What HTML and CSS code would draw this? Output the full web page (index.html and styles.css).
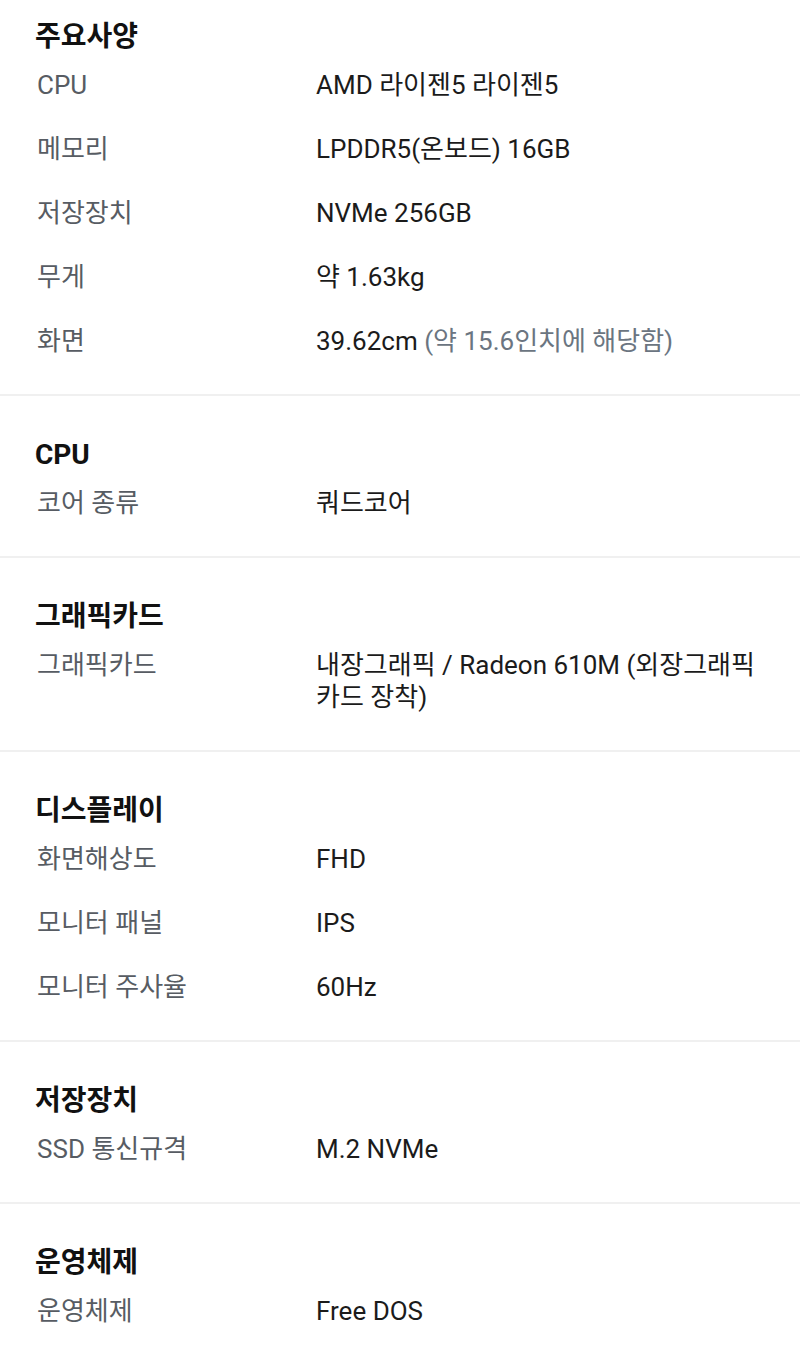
FILE: index.html
```html
<!DOCTYPE html>
<html lang="ko">
<head>
    <meta charset="UTF-8">
    <meta name="viewport" content="width=device-width, initial-scale=1.0">
    <title>상세 사양</title>
    <link rel="stylesheet" href="styles.css">
</head>
<body>
    <div class="spec-list">
        <section class="spec-section first">
            <h2>주요사양</h2>
            <div class="spec-row"><span class="label">CPU</span><span class="value">AMD 라이젠5 라이젠5</span></div>
            <div class="spec-row"><span class="label">메모리</span><span class="value">LPDDR5(온보드) 16GB</span></div>
            <div class="spec-row"><span class="label">저장장치</span><span class="value">NVMe 256GB</span></div>
            <div class="spec-row"><span class="label">무게</span><span class="value">약 1.63kg</span></div>
            <div class="spec-row"><span class="label">화면</span><span class="value">39.62cm <span class="note">(약 15.6인치에 해당함)</span></span></div>
        </section>

        <section class="spec-section">
            <h2>CPU</h2>
            <div class="spec-row"><span class="label">코어 종류</span><span class="value">쿼드코어</span></div>
        </section>

        <section class="spec-section">
            <h2>그래픽카드</h2>
            <div class="spec-row"><span class="label">그래픽카드</span><span class="value">내장그래픽 / Radeon 610M (외장그래픽 카드 장착)</span></div>
        </section>

        <section class="spec-section">
            <h2>디스플레이</h2>
            <div class="spec-row"><span class="label">화면해상도</span><span class="value">FHD</span></div>
            <div class="spec-row"><span class="label">모니터 패널</span><span class="value">IPS</span></div>
            <div class="spec-row"><span class="label">모니터 주사율</span><span class="value">60Hz</span></div>
        </section>

        <section class="spec-section">
            <h2>저장장치</h2>
            <div class="spec-row"><span class="label">SSD 통신규격</span><span class="value">M.2 NVMe</span></div>
        </section>

        <section class="spec-section last">
            <h2>운영체제</h2>
            <div class="spec-row"><span class="label">운영체제</span><span class="value">Free DOS</span></div>
        </section>
    </div>
</body>
</html>
```

FILE: styles.css
```css
body {
    margin: 0;
    background: #fff;
    font-family: Roboto, "Noto Sans CJK KR", sans-serif;
    color: #1b1b1b;
}
.spec-list {
    width: 100%;
}
.spec-section {
    padding: 43px 35px 21px 35px;
    border-bottom: 2px solid #f0f0f0;
}
.spec-section.first {
    padding-top: 21px;
}
.spec-section.last {
    border-bottom: none;
}
h2 {
    margin: 0;
    font-size: 28px;
    line-height: 32px;
    font-weight: bold;
    color: #111;
}
.spec-row {
    display: flex;
    padding: 16px 0;
    font-size: 26px;
    line-height: 32px;
}
.label {
    flex: 0 0 281px;
    padding-left: 2px;
    box-sizing: border-box;
    color: #575c63;
}
.value {
    flex: 1;
    color: #1b1b1b;
    padding-right: 4px;
}
.note {
    color: #6b7581;
}
```
